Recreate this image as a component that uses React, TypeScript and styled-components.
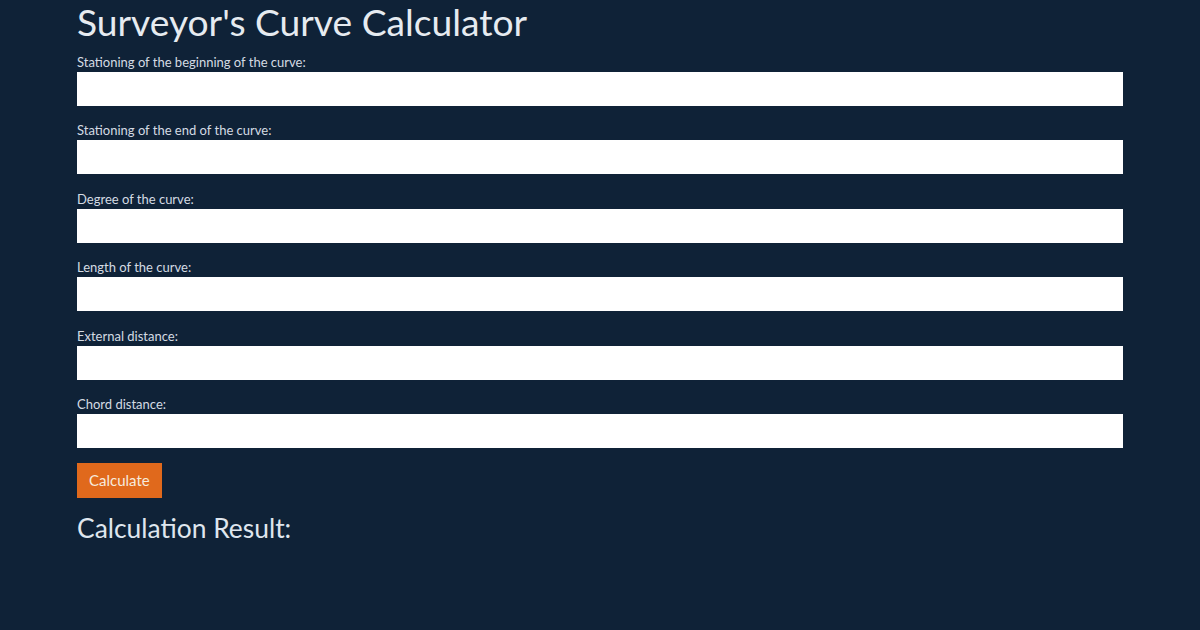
import styled, { createGlobalStyle } from 'styled-components';

const Global = createGlobalStyle`
  html, body {
    margin: 0;
    padding: 0;
    background: #0f2237;
    font-family: Lato, 'Liberation Sans', sans-serif;
  }
`;

const Page = styled.main`
  min-height: 630px;
  padding: 0 77px;
  background: #0f2237;
  color: #e4e9ef;
`;

const Title = styled.h1`
  margin: 0 0 10px;
  font-size: 37.2px;
  font-weight: 400;
  line-height: 44px;
  color: #e6ebf0;
`;

const Field = styled.div`
  display: flex;
  flex-direction: column;
  margin-bottom: 16.4px;
`;

const Label = styled.label`
  font-size: 13px;
  line-height: 16px;
  margin-bottom: 2px;
  color: #d4dbe3;
`;

const Input = styled.input`
  box-sizing: border-box;
  height: 34px;
  width: 100%;
  border: none;
  background: #ffffff;
  padding: 0 8px;
  font-family: inherit;
  font-size: 14px;
  outline: none;
`;

const Button = styled.button`
  margin-top: -1.5px;
  height: 35px;
  padding: 0 12px;
  border: none;
  background: #e0691c;
  color: #f6e9dc;
  font-family: inherit;
  font-size: 15px;
  cursor: pointer;
`;

const Result = styled.h2`
  margin: 15px 0 0;
  font-size: 26.4px;
  font-weight: 400;
  line-height: 1.2;
  color: #dfe6ee;
`;

const fields = [
  'Stationing of the beginning of the curve:',
  'Stationing of the end of the curve:',
  'Degree of the curve:',
  'Length of the curve:',
  'External distance:',
  'Chord distance:',
];

const App = () => {
  return (
    <>
      <Global />
      <Page>
        <Title>Surveyor's Curve Calculator</Title>
        {fields.map((f, i) => (
          <Field key={i}>
            <Label htmlFor={`f${i}`}>{f}</Label>
            <Input id={`f${i}`} type='text' />
          </Field>
        ))}
        <Button>Calculate</Button>
        <Result>Calculation Result:</Result>
      </Page>
    </>
  );
};

export default App;
